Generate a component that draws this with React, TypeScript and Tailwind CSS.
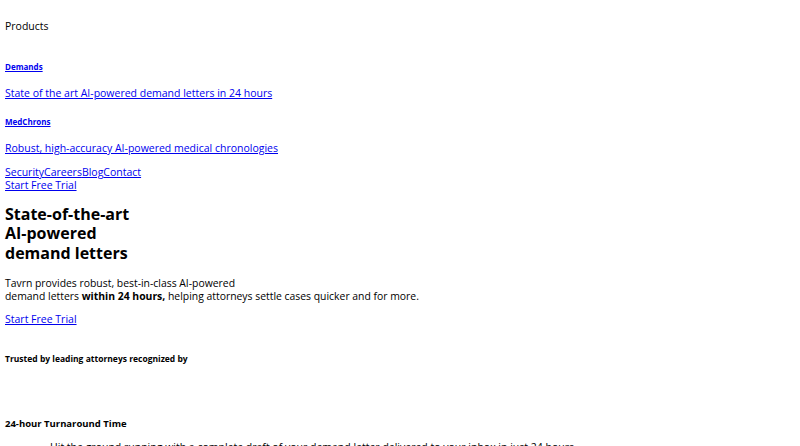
import React from "react";

const font = { fontFamily: '"Open Sans", "Noto Sans", sans-serif' };

export default function App() {
  return (
    <div className="bg-white text-black w-[800px] h-[446px] overflow-hidden px-[5px]" style={font}>
      <div className="pt-[19px] text-[10.5px] leading-[14px]">Products</div>
      <h5 className="mt-[28px] text-[8px] leading-[11px] font-bold">
        <a href="#" className="text-[#0000ee] underline">Demands</a>
      </h5>
      <p className="mt-[14px] text-[10.5px] leading-[14px]">
        <a href="#" className="text-[#0000ee] underline">State of the art AI-powered demand letters in 24 hours</a>
      </p>
      <h5 className="mt-[16px] text-[8px] leading-[11px] font-bold">
        <a href="#" className="text-[#0000ee] underline">MedChrons</a>
      </h5>
      <p className="mt-[14px] text-[10.5px] leading-[14px]">
        <a href="#" className="text-[#0000ee] underline">Robust, high-accuracy AI-powered medical chronologies</a>
      </p>
      <div className="mt-[11px] text-[10.5px] leading-[13px]">
        <a href="#" className="text-[#0000ee] underline">Security</a>
        <a href="#" className="text-[#0000ee] underline">Careers</a>
        <a href="#" className="text-[#0000ee] underline">Blog</a>
        <a href="#" className="text-[#0000ee] underline">Contact</a>
      </div>
      <div className="text-[10.5px] leading-[13px]">
        <a href="#" className="text-[#0000ee] underline">Start Free Trial</a>
      </div>
      <h1 className="mt-[12.5px] text-[16px] leading-[19.75px] font-bold">
        State-of-the-art
        <br />
        AI-powered
        <br />
        demand letters
      </h1>
      <p className="mt-[13px] text-[10.4px] leading-[13px]">
        Tavrn provides robust, best-in-class AI-powered
        <br />
        demand letters <strong className="font-bold">within 24 hours,</strong> helping attorneys settle cases quicker and for more.
      </p>
      <p className="mt-[10px] text-[10.5px] leading-[13px]">
        <a href="#" className="text-[#0000ee] underline">Start Free Trial</a>
      </p>
      <h5 className="mt-[27px] text-[8.5px] leading-[11px] font-bold">Trusted by leading attorneys recognized by</h5>
      <h4 className="mt-[54px] text-[9.5px] leading-[11px] font-bold">24-hour Turnaround Time</h4>
      <p className="mt-[12px] text-[10.5px] leading-[13px] pl-[45px]">
        Hit the ground running with a complete draft of your demand letter delivered to your inbox in just 24 hours.
      </p>
    </div>
  );
}
